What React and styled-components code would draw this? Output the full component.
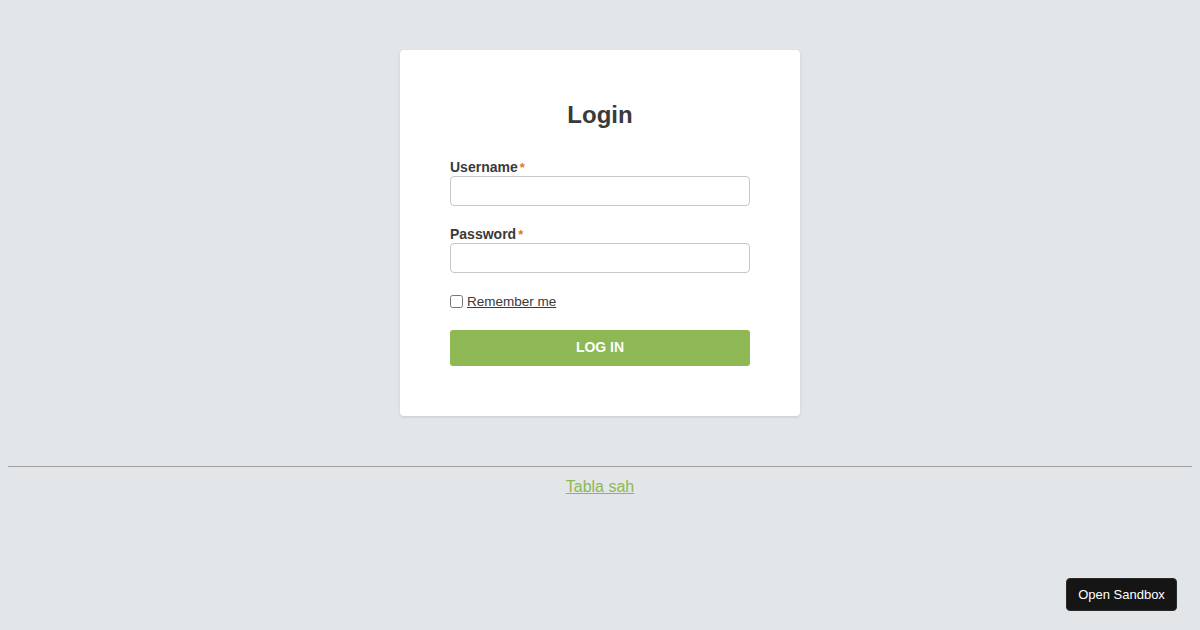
import React, { useState } from "react";
import styled, { createGlobalStyle } from "styled-components";

const GlobalStyle = createGlobalStyle`
  html, body {
    background: #e2e6e9;
  }
  body {
    margin: 8px;
    font-family: "Liberation Sans", Arial, sans-serif;
    color: #3a3a3a;
  }
`;

const Page = styled.div`
  padding-top: 42px;
`;

const Card = styled.form`
  width: 300px;
  margin: 0 auto;
  padding: 50px;
  background: #ffffff;
  border-radius: 4px;
  box-shadow: 0 1px 3px rgba(0, 0, 0, 0.12);
`;

const Title = styled.h1`
  margin: 1px 0 30px;
  font-size: 24px;
  line-height: 28px;
  text-align: center;
  font-weight: bold;
  color: #3a3a3a;
`;

const Field = styled.div`
  display: flex;
  flex-direction: column;
  margin-bottom: 20px;
`;

const Label = styled.label`
  font-size: 14px;
  line-height: 16px;
  height: 16px;
  font-weight: bold;
  margin-bottom: 1px;
  color: #3a3a3a;
`;

const Required = styled.span`
  color: #e07b1a;
  margin-left: 2px;
  font-size: 13px;
  line-height: 0;
`;

const Input = styled.input`
  box-sizing: border-box;
  width: 100%;
  height: 30px;
  padding: 4px 8px;
  border: 1px solid #c8c8c8;
  border-radius: 4px;
  font-size: 14px;
  font-family: inherit;
  outline: none;
`;

const CheckRow = styled.div`
  display: flex;
  align-items: center;
  gap: 4px;
  height: 16px;
  margin-bottom: 21px;
  font-size: 13.5px;
`;

const Check = styled.input`
  margin: 0;
  width: 13px;
  height: 13px;
`;

const CheckLabel = styled.label`
  text-decoration: underline;
  color: #3a3a3a;
`;

const Button = styled.button`
  width: 100%;
  height: 36px;
  padding: 0 0 2px;
  border: none;
  border-radius: 3px;
  background: #8db854;
  color: #ffffff;
  font-family: inherit;
  font-size: 14px;
  font-weight: bold;
  text-transform: uppercase;
  cursor: pointer;
`;

const Rule = styled.hr`
  margin: 50px 0 11px;
  border: none;
  border-top: 1px solid #a0a0a0;
`;

const Footer = styled.div`
  text-align: center;
`;

const FooterLink = styled.a`
  color: #8db854;
  font-size: 16px;
  line-height: 18px;
  text-decoration: underline;
`;

const SandboxButton = styled.a`
  position: fixed;
  right: 23px;
  bottom: 19px;
  box-sizing: border-box;
  width: 111px;
  height: 33px;
  display: flex;
  align-items: center;
  justify-content: center;
  background: #151515;
  border: 1px solid #2a2a2a;
  border-radius: 4px;
  color: #ffffff;
  font-family: "Liberation Sans", Arial, sans-serif;
  font-size: 13px;
  text-decoration: none;
`;

export default function App() {
  const [remember, setRemember] = useState(false);

  return (
    <Page>
      <GlobalStyle />
      <Card onSubmit={e => e.preventDefault()}>
        <Title>Login</Title>
        <Field>
          <Label htmlFor="username">
            Username<Required>*</Required>
          </Label>
          <Input id="username" type="text" />
        </Field>
        <Field>
          <Label htmlFor="password">
            Password<Required>*</Required>
          </Label>
          <Input id="password" type="password" />
        </Field>
        <CheckRow>
          <Check
            id="remember"
            type="checkbox"
            checked={remember}
            onChange={e => setRemember(e.target.checked)}
          />
          <CheckLabel htmlFor="remember">Remember me</CheckLabel>
        </CheckRow>
        <Button type="submit">Log in</Button>
      </Card>
      <Rule />
      <Footer>
        <FooterLink href="#">Tabla sah</FooterLink>
      </Footer>
      <SandboxButton href="#">Open Sandbox</SandboxButton>
    </Page>
  );
}
